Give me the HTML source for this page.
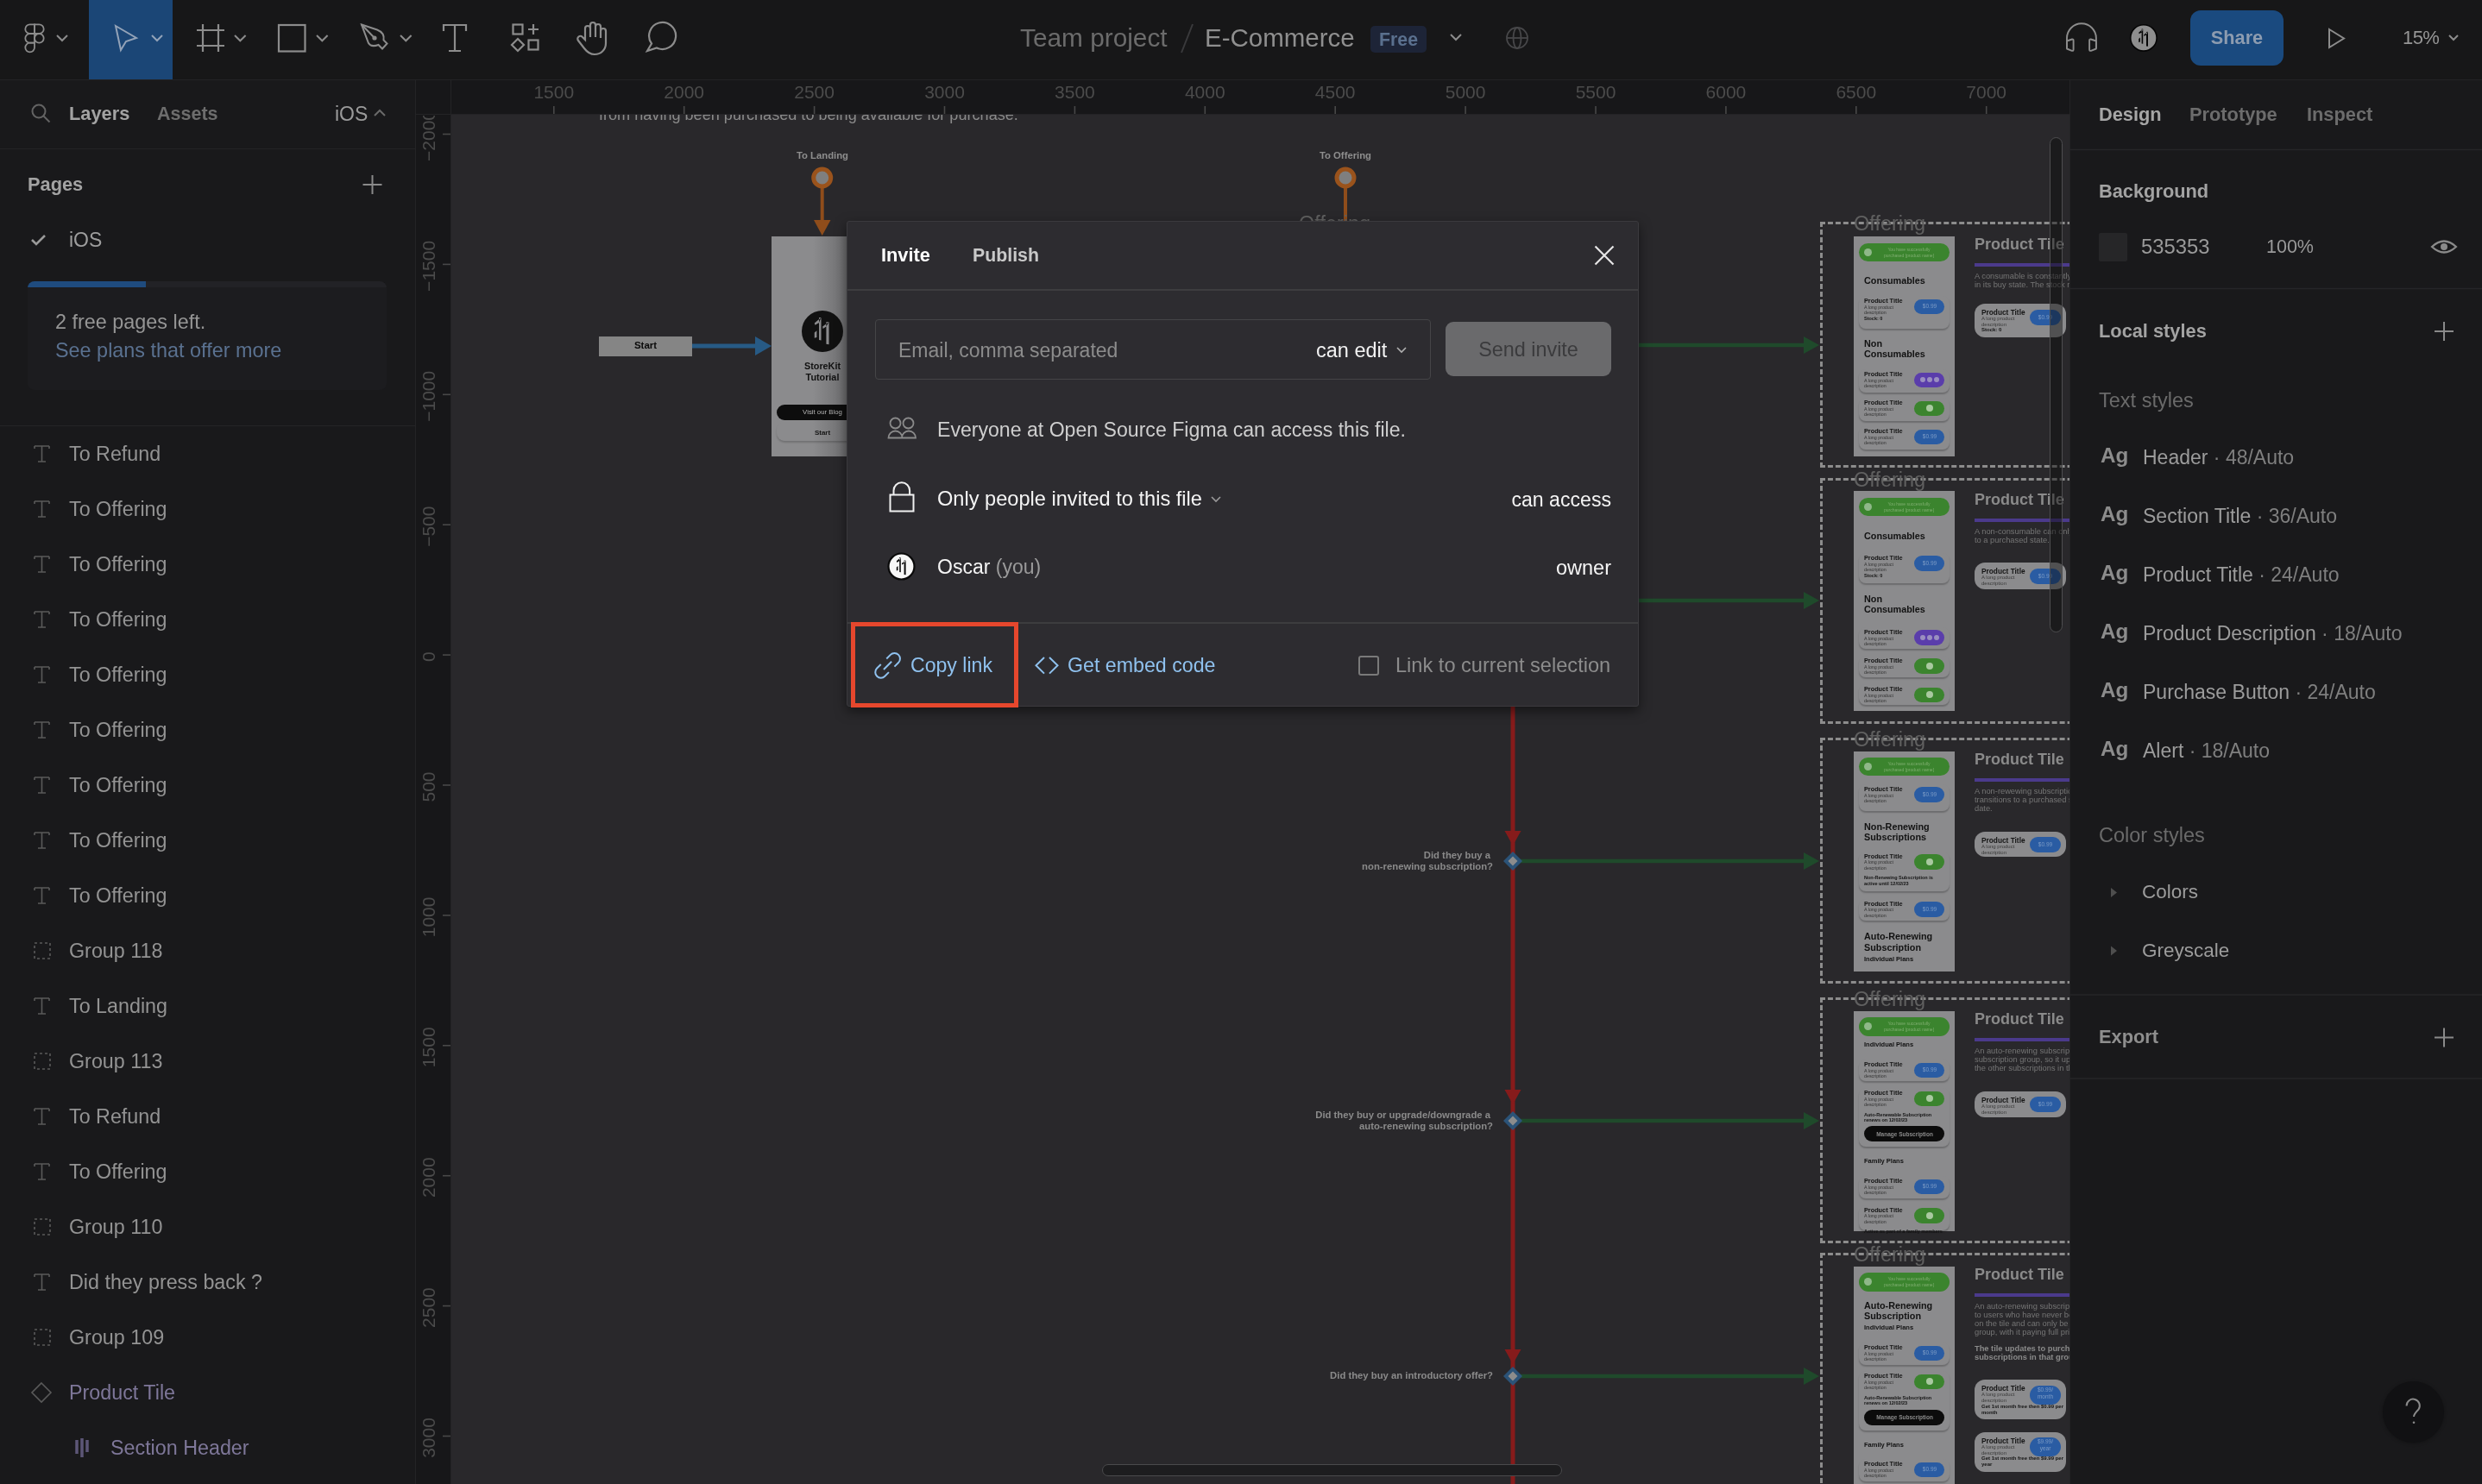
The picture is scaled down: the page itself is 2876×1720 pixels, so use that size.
<!DOCTYPE html>
<html><head><meta charset="utf-8">
<style>
*{box-sizing:border-box}
html,body{margin:0;padding:0}
body{width:2876px;height:1720px;position:relative;overflow:hidden;background:#19191b;font-family:"Liberation Sans",sans-serif;color:#9a9a9a}
.a{position:absolute}
.t{position:absolute;white-space:nowrap;line-height:30px;height:30px;will-change:transform}
svg{position:absolute;overflow:visible}
</style></head><body>

<!-- TOOLBAR -->
<div class="a" style="left:0;top:0;width:2876px;height:92px;background:#171718"></div>
<div class="a" style="left:0;top:92px;width:2876px;height:1px;background:#232325"></div>
<div class="a" style="left:103px;top:0;width:97px;height:92px;background:#1b4676"></div>
<svg style="left:0;top:0" width="900" height="92" fill="none" stroke="#8c8c8c" stroke-width="2.2">
  <!-- figma logo -->
  <g transform="translate(29.3,28.3)" stroke-width="1.8">
    <path d="M10.7 0H5.35a5.35 5.35 0 0 0 0 10.7h5.35z"/>
    <path d="M10.7 0h5.35a5.35 5.35 0 0 1 0 10.7h-5.35z"/>
    <path d="M10.7 10.7H5.35a5.35 5.35 0 0 0 0 10.7h5.35z"/>
    <circle cx="16.05" cy="16.05" r="5.35"/>
    <path d="M10.7 21.4H5.35a5.35 5.35 0 1 0 5.35 5.35z"/>
  </g>
  <path d="M66 41l6 6 6-6" stroke-width="2"/>
  <!-- select arrow -->
  <path d="M134 30L158 44L146 48L140 58Z" stroke="#93a3b8" stroke-width="2"/>
  <path d="M176 41l6 6 6-6" stroke="#93a3b8" stroke-width="2"/>
  <!-- frame -->
  <path d="M235 28v32M253 28v32M228 35h32M228 53h32"/>
  <path d="M272 41l6.3 6.3 6.3-6.3" stroke-width="2"/>
  <!-- rect -->
  <rect x="323" y="29" width="30.5" height="30.5"/>
  <path d="M367 41l6.3 6.3 6.3-6.3" stroke-width="2"/>
  <!-- pen -->
  <path d="M419 28.5L437 34.5Q446 38 444.5 46.5L448.5 50.5L443 56.5L438.5 52Q430 55 427 50Z" stroke-width="2"/>
  <path d="M419 28.5L433 43" stroke-width="2"/>
  <circle cx="434" cy="44" r="2.6" fill="#8c8c8c" stroke="none"/>
  <path d="M464 41l6.3 6.3 6.3-6.3" stroke-width="2"/>
  <!-- text -->
  <path d="M514 29h26M527 29v30M520 59h14M514 28v8M540 28v8"/>
  <!-- components -->
  <rect x="594.5" y="28.5" width="11" height="11"/>
  <path d="M618 28v12M612 34h12"/>
  <rect x="612.5" y="46.5" width="11" height="11"/>
  <path d="M600 45l7 7-7 7-7-7z"/>
  <!-- hand -->
  <path d="M678 46V33a3 3 0 0 1 6 0v10V29a3 3 0 0 1 6 0v14V31a3 3 0 0 1 6 0v13V36a3 3 0 0 1 6 0v14c0 8-6 13-13 13-6 0-9-3-12-7l-7-9a3 3 0 0 1 5-4z"/>
  <!-- comment -->
  <path d="M750 59l5-8.5a15.5 15.5 0 1 1 6 5z"/>
</svg>
<div class="t" style="left:1182px;top:29px;font-size:29.8px;color:#6b6b6b">Team project</div>
<svg style="left:0;top:0" width="1" height="1"><path d="M1382 28L1369 61" stroke="#3a3a3c" stroke-width="2"/></svg>
<div class="t" style="left:1396px;top:29px;font-size:29.5px;color:#8f8f8f">E-Commerce</div>
<div class="a" style="left:1588px;top:30px;width:65px;height:31px;border-radius:5px;background:#1d2437"></div>
<div class="t" style="left:1588px;width:65px;text-align:center;top:31px;font-size:21.3px;font-weight:700;color:#5a708e">Free</div>
<svg style="left:0;top:0" width="2876" height="92" fill="none" stroke="#8c8c8c" stroke-width="2">
  <path d="M1681 40l6 6 6-6"/>
  <g stroke="#474749" stroke-width="1.8">
    <circle cx="1758" cy="44" r="12"/>
    <ellipse cx="1758" cy="44" rx="4.5" ry="12"/>
    <path d="M1746 44h24"/>
  </g>
  <!-- headphones -->
  <g stroke-width="1.9" stroke-linejoin="round">
  <path d="M2395 56V44.15A16.95 16.95 0 0 1 2428.9 44.15V56"/>
  <path d="M2395 47.5L2401 45.5Q2402.6 45.2 2402.6 47V57.3Q2402.6 59.3 2400.8 58.8L2395 56.5Z"/>
  <path d="M2428.9 47.5L2422.7 45.5Q2421.1 45.2 2421.1 47V57.3Q2421.1 59.3 2422.9 58.8L2428.9 56.5Z"/>
  </g>
  <!-- play -->
  <path d="M2699 34l17 10.5-17 10.5z"/>
  <path d="M2838 41l5 5 5-5"/>
</svg>
<svg style="left:0;top:0" width="1" height="1"><circle cx="2483.9" cy="43.9" r="15.2" fill="#8e8e8e" stroke="#050505" stroke-width="1.6"/><path transform="translate(2483.9 43.9)" d="M-2.3 -10.4L-0.7 -10.4L-0.7 6.8L-2.3 6.5ZM-0.7 -10.4L-5.7 -6.2L-5.2 -4.6L-2.3 -6.5ZM-5.7 1L-4 -0.5L-4 4.5L-5.7 5ZM3.1 -7L5.1 -7.1L5.1 9.8L3.1 9.5ZM5.1 -7.1L0.4 -3.6L0.6 -1.9L3.1 -3.6Z" fill="#050505"/></svg>
<div class="a" style="left:2538px;top:12px;width:108px;height:64px;border-radius:12px;background:#1a4a7f"></div>
<div class="t" style="left:2538px;top:29px;width:108px;text-align:center;font-size:21.7px;font-weight:700;color:#8d9cb0">Share</div>
<div class="t" style="left:2784px;top:29px;font-size:22px;letter-spacing:-0.6px;color:#969696">15%</div>

<!-- LEFT PANEL -->
<div class="a" id="left" style="left:0;top:93px;width:481px;height:1627px;background:#19191b"></div>
<div class="a" style="left:481px;top:93px;width:1px;height:1627px;background:#242426"></div>
<div class="a" style="left:0;top:172px;width:481px;height:1px;background:#242426"></div>
<div class="a" style="left:0;top:493px;width:481px;height:1px;background:#242426"></div>


<!-- LEFT CONTENT -->
<svg style="left:0;top:0" width="481" height="300" fill="none" stroke="#8a8a8a" stroke-width="2">
  <g stroke="#636363"><circle cx="45" cy="129" r="7.5"/>
  <path d="M50.5 134.5l7 7"/></g>
  <path d="M434 134l6-6 6 6" stroke="#6a6a6a"/>
  <path d="M431.5 203v22M420.5 214h22" stroke="#8a8a8a"/>
  <path d="M37 278l5 5 10-10" stroke="#9a9a9a" stroke-width="2.6"/>
</svg>
<div class="t" style="left:80px;top:117px;font-size:21.8px;font-weight:700;color:#a3a3a3">Layers</div>
<div class="t" style="left:182px;top:117px;font-size:21.5px;font-weight:700;color:#6d6d6d">Assets</div>
<div class="t" style="left:388px;top:117px;font-size:23px;color:#9a9a9a">iOS</div>
<div class="t" style="left:32px;top:199px;font-size:21.8px;font-weight:700;color:#a3a3a3">Pages</div>
<div class="t" style="left:80px;top:263px;font-size:23px;color:#9d9d9d">iOS</div>
<div class="a" style="left:32px;top:326px;width:416px;height:126px;border-radius:8px;background:#1c1c1f;overflow:hidden">
  <div class="a" style="left:0;top:0;width:416px;height:7px;background:#222226"></div>
  <div class="a" style="left:0;top:0;width:137px;height:7px;background:#1f4b7e"></div>
</div>
<div class="t" style="left:64px;top:358px;font-size:23.4px;color:#959595">2 free pages left.</div>
<div class="t" style="left:64px;top:391px;font-size:23.4px;color:#5a7190">See plans that offer more</div>
<svg style="left:0;top:0" width="1" height="1" fill="none" stroke="#5a5a5a" stroke-width="1.6"><path d="M40 517h17M48.5 517v18M44 535h9M40 517v3M57 517v3"/></svg>
<div class="t" style="left:80px;top:511px;font-size:23.3px;color:#939393">To Refund</div>
<svg style="left:0;top:0" width="1" height="1" fill="none" stroke="#5a5a5a" stroke-width="1.6"><path d="M40 581h17M48.5 581v18M44 599h9M40 581v3M57 581v3"/></svg>
<div class="t" style="left:80px;top:575px;font-size:23.3px;color:#939393">To Offering</div>
<svg style="left:0;top:0" width="1" height="1" fill="none" stroke="#5a5a5a" stroke-width="1.6"><path d="M40 645h17M48.5 645v18M44 663h9M40 645v3M57 645v3"/></svg>
<div class="t" style="left:80px;top:639px;font-size:23.3px;color:#939393">To Offering</div>
<svg style="left:0;top:0" width="1" height="1" fill="none" stroke="#5a5a5a" stroke-width="1.6"><path d="M40 709h17M48.5 709v18M44 727h9M40 709v3M57 709v3"/></svg>
<div class="t" style="left:80px;top:703px;font-size:23.3px;color:#939393">To Offering</div>
<svg style="left:0;top:0" width="1" height="1" fill="none" stroke="#5a5a5a" stroke-width="1.6"><path d="M40 773h17M48.5 773v18M44 791h9M40 773v3M57 773v3"/></svg>
<div class="t" style="left:80px;top:767px;font-size:23.3px;color:#939393">To Offering</div>
<svg style="left:0;top:0" width="1" height="1" fill="none" stroke="#5a5a5a" stroke-width="1.6"><path d="M40 837h17M48.5 837v18M44 855h9M40 837v3M57 837v3"/></svg>
<div class="t" style="left:80px;top:831px;font-size:23.3px;color:#939393">To Offering</div>
<svg style="left:0;top:0" width="1" height="1" fill="none" stroke="#5a5a5a" stroke-width="1.6"><path d="M40 901h17M48.5 901v18M44 919h9M40 901v3M57 901v3"/></svg>
<div class="t" style="left:80px;top:895px;font-size:23.3px;color:#939393">To Offering</div>
<svg style="left:0;top:0" width="1" height="1" fill="none" stroke="#5a5a5a" stroke-width="1.6"><path d="M40 965h17M48.5 965v18M44 983h9M40 965v3M57 965v3"/></svg>
<div class="t" style="left:80px;top:959px;font-size:23.3px;color:#939393">To Offering</div>
<svg style="left:0;top:0" width="1" height="1" fill="none" stroke="#5a5a5a" stroke-width="1.6"><path d="M40 1029h17M48.5 1029v18M44 1047h9M40 1029v3M57 1029v3"/></svg>
<div class="t" style="left:80px;top:1023px;font-size:23.3px;color:#939393">To Offering</div>
<svg style="left:0;top:0" width="1" height="1" fill="none" stroke="#5a5a5a" stroke-width="1.6"><rect x="40" y="1093" width="18" height="18" stroke-dasharray="3 3"/></svg>
<div class="t" style="left:80px;top:1087px;font-size:23.3px;color:#939393">Group 118</div>
<svg style="left:0;top:0" width="1" height="1" fill="none" stroke="#5a5a5a" stroke-width="1.6"><path d="M40 1157h17M48.5 1157v18M44 1175h9M40 1157v3M57 1157v3"/></svg>
<div class="t" style="left:80px;top:1151px;font-size:23.3px;color:#939393">To Landing</div>
<svg style="left:0;top:0" width="1" height="1" fill="none" stroke="#5a5a5a" stroke-width="1.6"><rect x="40" y="1221" width="18" height="18" stroke-dasharray="3 3"/></svg>
<div class="t" style="left:80px;top:1215px;font-size:23.3px;color:#939393">Group 113</div>
<svg style="left:0;top:0" width="1" height="1" fill="none" stroke="#5a5a5a" stroke-width="1.6"><path d="M40 1285h17M48.5 1285v18M44 1303h9M40 1285v3M57 1285v3"/></svg>
<div class="t" style="left:80px;top:1279px;font-size:23.3px;color:#939393">To Refund</div>
<svg style="left:0;top:0" width="1" height="1" fill="none" stroke="#5a5a5a" stroke-width="1.6"><path d="M40 1349h17M48.5 1349v18M44 1367h9M40 1349v3M57 1349v3"/></svg>
<div class="t" style="left:80px;top:1343px;font-size:23.3px;color:#939393">To Offering</div>
<svg style="left:0;top:0" width="1" height="1" fill="none" stroke="#5a5a5a" stroke-width="1.6"><rect x="40" y="1413" width="18" height="18" stroke-dasharray="3 3"/></svg>
<div class="t" style="left:80px;top:1407px;font-size:23.3px;color:#939393">Group 110</div>
<svg style="left:0;top:0" width="1" height="1" fill="none" stroke="#5a5a5a" stroke-width="1.6"><path d="M40 1477h17M48.5 1477v18M44 1495h9M40 1477v3M57 1477v3"/></svg>
<div class="t" style="left:80px;top:1471px;font-size:23.3px;color:#939393">Did they press back ?</div>
<svg style="left:0;top:0" width="1" height="1" fill="none" stroke="#5a5a5a" stroke-width="1.6"><rect x="40" y="1541" width="18" height="18" stroke-dasharray="3 3"/></svg>
<div class="t" style="left:80px;top:1535px;font-size:23.3px;color:#939393">Group 109</div>
<svg style="left:0;top:0" width="1" height="1" fill="none" stroke="#5a5a5a" stroke-width="1.6"><path d="M48 1603l11 11-11 11-11-11z"/></svg>
<div class="t" style="left:80px;top:1599px;font-size:23.3px;color:#7e7799">Product Tile</div>
<svg style="left:0;top:0" width="1" height="1" fill="none" stroke="#5a5a5a" stroke-width="1.6"><path d="M89 1669v16M95 1667v22M101 1669v14" stroke-width="3.5" stroke="#5c5677"/></svg>
<div class="t" style="left:128px;top:1663px;font-size:23.3px;color:#7e7799">Section Header</div>

<!-- RULERS -->
<div class="a" style="left:482px;top:93px;width:1916px;height:40px;background:#171719"></div>
<div class="a" style="left:482px;top:133px;width:40px;height:1587px;background:#171719"></div>
<div class="a" style="left:482px;top:132px;width:1916px;height:1px;background:#232325"></div>
<div class="a" style="left:522px;top:93px;width:1px;height:1627px;background:#232325"></div>



<!-- RULER LABELS -->
<svg style="left:0;top:0" width="2876" height="1720">
<g font-family="Liberation Sans" font-size="21px" fill="#4b4b4b" text-anchor="middle">
<text x="641.8" y="114">1500</text>
<text x="792.7" y="114">2000</text>
<text x="943.6" y="114">2500</text>
<text x="1094.5" y="114">3000</text>
<text x="1245.4" y="114">3500</text>
<text x="1396.3" y="114">4000</text>
<text x="1547.2" y="114">4500</text>
<text x="1698.1" y="114">5000</text>
<text x="1849.0" y="114">5500</text>
<text x="1999.9" y="114">6000</text>
<text x="2150.8" y="114">6500</text>
<text x="2301.7" y="114">7000</text>
</g>
<g stroke="#484848" stroke-width="1.6">
<path d="M641.8 123v9"/>
<path d="M792.7 123v9"/>
<path d="M943.6 123v9"/>
<path d="M1094.5 123v9"/>
<path d="M1245.4 123v9"/>
<path d="M1396.3 123v9"/>
<path d="M1547.2 123v9"/>
<path d="M1698.1 123v9"/>
<path d="M1849.0 123v9"/>
<path d="M1999.9 123v9"/>
<path d="M2150.8 123v9"/>
<path d="M2301.7 123v9"/>
</g></svg>
<div class="a" style="left:482px;top:134px;width:40px;height:1586px;overflow:hidden"><svg style="left:-482px;top:-134px" width="2876" height="1720">
<g font-family="Liberation Sans" font-size="21px" fill="#4b4b4b" text-anchor="middle">
<text transform="translate(504,157.5) rotate(-90)">−2000</text>
<text transform="translate(504,308.4) rotate(-90)">−1500</text>
<text transform="translate(504,459.3) rotate(-90)">−1000</text>
<text transform="translate(504,610.2) rotate(-90)">−500</text>
<text transform="translate(504,761.1) rotate(-90)">0</text>
<text transform="translate(504,912.0) rotate(-90)">500</text>
<text transform="translate(504,1062.9) rotate(-90)">1000</text>
<text transform="translate(504,1213.8) rotate(-90)">1500</text>
<text transform="translate(504,1364.7) rotate(-90)">2000</text>
<text transform="translate(504,1515.6) rotate(-90)">2500</text>
<text transform="translate(504,1666.5) rotate(-90)">3000</text>
<text transform="translate(504,1817.4) rotate(-90)">3500</text>
</g>
<g stroke="#484848" stroke-width="1.6">
<path d="M513 155.5h9"/>
<path d="M513 306.4h9"/>
<path d="M513 457.3h9"/>
<path d="M513 608.2h9"/>
<path d="M513 759.1h9"/>
<path d="M513 910.0h9"/>
<path d="M513 1060.9h9"/>
<path d="M513 1211.8h9"/>
<path d="M513 1362.7h9"/>
<path d="M513 1513.6h9"/>
<path d="M513 1664.5h9"/>
<path d="M513 1815.4h9"/>
</g>
</svg></div>
<!-- CANVAS -->
<div class="a" id="canvas" style="left:523px;top:133px;width:1875px;height:1587px;background:#29282b;overflow:hidden"><div class="a" style="left:-523px;top:-133px;width:2876px;height:1720px">
<!-- CANVAS START -->
<div class="t" style="left:694.0px;top:123.1px;height:21.7px;line-height:21.7px;font-size:18.1px;font-weight:400;color:#8a8a8a;">from having been purchased to being available for purchase.</div>
<div class="t" style="left:652.7px;width:600px;text-align:center;top:174.2px;height:13.6px;line-height:13.6px;font-size:11.3px;font-weight:700;color:#8e8e8e;">To Landing</div>
<svg style="left:0;top:0" width="1" height="1"><path d="M952.7 206V258" stroke="#8f4d1b" stroke-width="4"/><circle cx="952.7" cy="206" r="10" fill="#7f7f7f" stroke="#9a531c" stroke-width="5"/></svg>
<svg style="left:0;top:0" width="1" height="1"><path d="M943 255L962.5 255L952.7 273Z" fill="#8f4d1b"/></svg>
<div class="t" style="left:1259.0px;width:600px;text-align:center;top:174.2px;height:13.6px;line-height:13.6px;font-size:11.3px;font-weight:700;color:#8e8e8e;">To Offering</div>
<svg style="left:0;top:0" width="1" height="1"><path d="M1559 206V256" stroke="#8f4d1b" stroke-width="4"/><circle cx="1559" cy="206" r="10" fill="#7f7f7f" stroke="#9a531c" stroke-width="5"/></svg>
<div class="t" style="left:1505.0px;top:244.9px;height:28.2px;line-height:28.2px;font-size:23.5px;font-weight:400;color:#606060;">Offering</div>
<div class="a" style="left:694.0px;top:390.0px;width:108.0px;height:22.5px;background:#858585;border-radius:0px;"></div>
<div class="t" style="left:448.0px;width:600px;text-align:center;top:394.1px;height:13.8px;line-height:13.8px;font-size:11.5px;font-weight:700;color:#0b0b0b;">Start</div>
<svg style="left:0;top:0" width="1" height="1"><path d="M802 401H878" stroke="#275a85" stroke-width="5"/><path d="M875 390L894 401L875 412Z" fill="#275a85"/></svg>
<div class="a" style="left:894.0px;top:274.0px;width:87.0px;height:255.0px;background:#8b8b8d;border-radius:0px;background:linear-gradient(90deg,#8b8b8d 0%,#8b8b8d 55%,#6e6e70 100%)"></div>
<div class="a" style="left:928.6px;top:360px;width:48px;height:48px;border-radius:50%;background:#111"></div>
<svg style="left:0;top:0" width="1" height="1"><path transform="translate(952.6 384) scale(1.55)" d="M-2.3 -10.4L-0.7 -10.4L-0.7 6.8L-2.3 6.5ZM-0.7 -10.4L-5.7 -6.2L-5.2 -4.6L-2.3 -6.5ZM-5.7 1L-4 -0.5L-4 4.5L-5.7 5ZM3.1 -7L5.1 -7.1L5.1 9.8L3.1 9.5ZM5.1 -7.1L0.4 -3.6L0.6 -1.9L3.1 -3.6Z" fill="#8b8b8d"/></svg>
<div class="t" style="left:652.6px;width:600px;text-align:center;top:418.0px;height:13.0px;line-height:13.0px;font-size:10.8px;font-weight:700;color:#111;">StoreKit</div>
<div class="t" style="left:652.6px;width:600px;text-align:center;top:430.5px;height:13.0px;line-height:13.0px;font-size:10.8px;font-weight:700;color:#111;">Tutorial</div>
<div class="a" style="left:900.0px;top:468.5px;width:110.0px;height:18.0px;background:#0d0d0d;border-radius:9px;"></div>
<div class="t" style="left:653.0px;width:600px;text-align:center;top:472.8px;height:9.4px;line-height:9.4px;font-size:7.8px;font-weight:400;color:#b5b5b5;">Visit our Blog</div>
<div class="a" style="left:900.0px;top:489.0px;width:110.0px;height:22.0px;background:transparent;border-radius:9px;box-shadow:0 2px 2px rgba(0,0,0,0.18)"></div>
<div class="t" style="left:652.6px;width:600px;text-align:center;top:496.7px;height:9.6px;line-height:9.6px;font-size:8px;font-weight:700;color:#151515;">Start</div>
<svg style="left:0;top:0" width="1" height="1"><path d="M1753 700V1720" stroke="#861b1b" stroke-width="5"/><path d="M1743.5 963L1762.5 963L1753 980Z" fill="#861b1b"/><path d="M1743.5 1263L1762.5 1263L1753 1280Z" fill="#861b1b"/><path d="M1743.5 1564L1762.5 1564L1753 1581Z" fill="#861b1b"/><path d="M1760 998H2092" stroke="#1f4a2b" stroke-width="4.5"/><path d="M2090 988L2108 998L2090 1008Z" fill="#1f4a2b"/><path d="M1753 987L1764 998L1753 1009L1742 998Z" fill="#2b5378"/><path d="M1753 992.5L1758.5 998L1753 1003.5L1747.5 998Z" fill="#8c8c8c"/><path d="M1760 1299H2092" stroke="#1f4a2b" stroke-width="4.5"/><path d="M2090 1289L2108 1299L2090 1309Z" fill="#1f4a2b"/><path d="M1753 1288L1764 1299L1753 1310L1742 1299Z" fill="#2b5378"/><path d="M1753 1293.5L1758.5 1299L1753 1304.5L1747.5 1299Z" fill="#8c8c8c"/><path d="M1760 1595H2092" stroke="#1f4a2b" stroke-width="4.5"/><path d="M2090 1585L2108 1595L2090 1605Z" fill="#1f4a2b"/><path d="M1753 1584L1764 1595L1753 1606L1742 1595Z" fill="#2b5378"/><path d="M1753 1589.5L1758.5 1595L1753 1600.5L1747.5 1595Z" fill="#8c8c8c"/><path d="M1890 400H2092" stroke="#1f4a2b" stroke-width="4.5"/><path d="M2090 390L2108 400L2090 410Z" fill="#1f4a2b"/><path d="M1890 696H2092" stroke="#1f4a2b" stroke-width="4.5"/><path d="M2090 686L2108 696L2090 706Z" fill="#1f4a2b"/></svg>
<div class="t" style="left:1127.0px;width:600px;text-align:right;top:984.8px;height:13.6px;line-height:13.6px;font-size:11.3px;font-weight:700;color:#8a8a8a;">Did they buy a</div>
<div class="t" style="left:1130.0px;width:600px;text-align:right;top:997.8px;height:13.6px;line-height:13.6px;font-size:11.3px;font-weight:700;color:#8a8a8a;">non-renewing subscription?</div>
<div class="t" style="left:1127.0px;width:600px;text-align:right;top:1286.2px;height:13.6px;line-height:13.6px;font-size:11.3px;font-weight:700;color:#8a8a8a;">Did they buy or upgrade/downgrade a</div>
<div class="t" style="left:1130.0px;width:600px;text-align:right;top:1299.2px;height:13.6px;line-height:13.6px;font-size:11.3px;font-weight:700;color:#8a8a8a;">auto-renewing subscription?</div>
<div class="t" style="left:1130.0px;width:600px;text-align:right;top:1588.2px;height:13.6px;line-height:13.6px;font-size:11.3px;font-weight:700;color:#8a8a8a;">Did they buy an introductory offer?</div>
<div class="a" style="left:2109px;top:257.0px;width:400px;height:285px;border:3px dashed #8c8c8c"></div>
<div class="t" style="left:2148.0px;top:245.4px;height:28.2px;line-height:28.2px;font-size:23.5px;font-weight:400;color:#606060;">Offering</div>
<div class="t" style="left:2288.0px;top:272.7px;height:21.6px;line-height:21.6px;font-size:18px;font-weight:700;color:#8a8a8a;">Product Tile</div>
<div class="a" style="left:2288.0px;top:304.5px;width:112.0px;height:4.0px;background:#4b3a8c;border-radius:0px;"></div>
<div class="t" style="left:2288.0px;top:314.9px;height:11.2px;line-height:11.2px;font-size:9.3px;font-weight:400;color:#757575;">A consumable is constantly purchas</div>
<div class="t" style="left:2288.0px;top:324.7px;height:11.2px;line-height:11.2px;font-size:9.3px;font-weight:400;color:#757575;">in its buy state. The stock number</div>
<div class="a" style="left:2288.0px;top:352.0px;width:106.0px;height:38.5px;background:#8b8b8d;border-radius:12px;"></div>
<div class="t" style="left:2296.0px;top:357.0px;height:10.0px;line-height:10.0px;font-size:8.3px;font-weight:700;color:#141414;">Product Title</div>
<div class="t" style="left:2296.0px;top:365.9px;height:7.2px;line-height:7.2px;font-size:6px;font-weight:400;color:#3a3a3a;">A long product</div>
<div class="t" style="left:2296.0px;top:372.9px;height:7.2px;line-height:7.2px;font-size:6px;font-weight:400;color:#3a3a3a;">description</div>
<div class="t" style="left:2296.0px;top:379.4px;height:7.2px;line-height:7.2px;font-size:6px;font-weight:700;color:#141414;">Stock: 0</div>
<div class="a" style="left:2352.0px;top:358.5px;width:36.0px;height:18.0px;background:#2a5ca3;border-radius:12px;"></div>
<div class="t" style="left:2070.0px;width:600px;text-align:center;top:363.6px;height:7.8px;line-height:7.8px;font-size:6.5px;font-weight:400;color:#7d9cc6;">$0.99</div>
<div class="a" style="left:2148.0px;top:274.0px;width:117.2px;height:254.6px;background:#8b8b8d;border-radius:0px;"></div>
<div class="a" style="left:2154.0px;top:281.6px;width:105.0px;height:21.5px;background:#3b842e;border-radius:11px;"></div>
<div class="a" style="left:2160px;top:287.6px;width:9px;height:9px;border-radius:50%;background:#8fb889"></div>
<div class="t" style="left:1912.0px;width:600px;text-align:center;top:285.6px;height:6.0px;line-height:6.0px;font-size:5px;font-weight:400;color:#7fae70;">You have successfully</div>
<div class="t" style="left:1912.0px;width:600px;text-align:center;top:292.6px;height:6.0px;line-height:6.0px;font-size:5px;font-weight:400;color:#7fae70;">purchased [product name]</div>
<div class="t" style="left:2160.0px;top:319.1px;height:13.0px;line-height:13.0px;font-size:10.8px;font-weight:700;color:#121212;">Consumables</div>
<div class="a" style="left:2154.0px;top:343.0px;width:105.0px;height:38.0px;background:#8b8b8d;border-radius:8px;box-shadow:0 2px 1.5px rgba(0,0,0,0.22)"></div>
<div class="t" style="left:2160.0px;top:345.1px;height:8.8px;line-height:8.8px;font-size:7.3px;font-weight:700;color:#141414;">Product Title</div>
<div class="t" style="left:2160.0px;top:352.8px;height:6.4px;line-height:6.4px;font-size:5.3px;font-weight:400;color:#333;">A long product</div>
<div class="t" style="left:2160.0px;top:359.3px;height:6.4px;line-height:6.4px;font-size:5.3px;font-weight:400;color:#333;">description</div>
<div class="t" style="left:2160.0px;top:365.7px;height:6.6px;line-height:6.6px;font-size:5.5px;font-weight:700;color:#141414;">Stock: 0</div>
<div class="a" style="left:2218.0px;top:346.5px;width:35.0px;height:17.5px;background:#2a5ca3;border-radius:20px;"></div>
<div class="t" style="left:1935.5px;width:600px;text-align:center;top:351.4px;height:7.8px;line-height:7.8px;font-size:6.5px;font-weight:400;color:#7d9cc6;">$0.99</div>
<div class="t" style="left:2160.0px;top:391.5px;height:13.0px;line-height:13.0px;font-size:10.8px;font-weight:700;color:#121212;">Non</div>
<div class="t" style="left:2160.0px;top:403.5px;height:13.0px;line-height:13.0px;font-size:10.8px;font-weight:700;color:#121212;">Consumables</div>
<div class="a" style="left:2154.0px;top:428.0px;width:105.0px;height:27.0px;background:#8b8b8d;border-radius:8px;box-shadow:0 2px 1.5px rgba(0,0,0,0.22)"></div>
<div class="t" style="left:2160.0px;top:430.1px;height:8.8px;line-height:8.8px;font-size:7.3px;font-weight:700;color:#141414;">Product Title</div>
<div class="t" style="left:2160.0px;top:437.8px;height:6.4px;line-height:6.4px;font-size:5.3px;font-weight:400;color:#333;">A long product</div>
<div class="t" style="left:2160.0px;top:444.3px;height:6.4px;line-height:6.4px;font-size:5.3px;font-weight:400;color:#333;">description</div>
<div class="a" style="left:2218.0px;top:431.5px;width:35.0px;height:17.5px;background:#5a3dab;border-radius:20px;"></div>
<div class="a" style="left:2224.5px;top:437.2px;width:6px;height:6px;border-radius:50%;background:#9a8fc0"></div>
<div class="a" style="left:2232.5px;top:437.2px;width:6px;height:6px;border-radius:50%;background:#9a8fc0"></div>
<div class="a" style="left:2240.5px;top:437.2px;width:6px;height:6px;border-radius:50%;background:#9a8fc0"></div>
<div class="a" style="left:2154.0px;top:461.0px;width:105.0px;height:27.0px;background:#8b8b8d;border-radius:8px;box-shadow:0 2px 1.5px rgba(0,0,0,0.22)"></div>
<div class="t" style="left:2160.0px;top:463.1px;height:8.8px;line-height:8.8px;font-size:7.3px;font-weight:700;color:#141414;">Product Title</div>
<div class="t" style="left:2160.0px;top:470.8px;height:6.4px;line-height:6.4px;font-size:5.3px;font-weight:400;color:#333;">A long product</div>
<div class="t" style="left:2160.0px;top:477.3px;height:6.4px;line-height:6.4px;font-size:5.3px;font-weight:400;color:#333;">description</div>
<div class="a" style="left:2218.0px;top:464.5px;width:35.0px;height:17.5px;background:#3b842e;border-radius:20px;"></div>
<div class="a" style="left:2231.5px;top:469.2px;width:8px;height:8px;border-radius:50%;background:#a9c9a0"></div>
<div class="a" style="left:2154.0px;top:494.0px;width:105.0px;height:27.0px;background:#8b8b8d;border-radius:8px;box-shadow:0 2px 1.5px rgba(0,0,0,0.22)"></div>
<div class="t" style="left:2160.0px;top:496.1px;height:8.8px;line-height:8.8px;font-size:7.3px;font-weight:700;color:#141414;">Product Title</div>
<div class="t" style="left:2160.0px;top:503.8px;height:6.4px;line-height:6.4px;font-size:5.3px;font-weight:400;color:#333;">A long product</div>
<div class="t" style="left:2160.0px;top:510.3px;height:6.4px;line-height:6.4px;font-size:5.3px;font-weight:400;color:#333;">description</div>
<div class="a" style="left:2218.0px;top:497.5px;width:35.0px;height:17.5px;background:#2a5ca3;border-radius:20px;"></div>
<div class="t" style="left:1935.5px;width:600px;text-align:center;top:502.4px;height:7.8px;line-height:7.8px;font-size:6.5px;font-weight:400;color:#7d9cc6;">$0.99</div>
<div class="a" style="left:2109px;top:553.5px;width:400px;height:285px;border:3px dashed #8c8c8c"></div>
<div class="t" style="left:2148.0px;top:541.9px;height:28.2px;line-height:28.2px;font-size:23.5px;font-weight:400;color:#606060;">Offering</div>
<div class="t" style="left:2288.0px;top:569.2px;height:21.6px;line-height:21.6px;font-size:18px;font-weight:700;color:#8a8a8a;">Product Tile</div>
<div class="a" style="left:2288.0px;top:601.0px;width:112.0px;height:4.0px;background:#4b3a8c;border-radius:0px;"></div>
<div class="t" style="left:2288.0px;top:611.4px;height:11.2px;line-height:11.2px;font-size:9.3px;font-weight:400;color:#757575;">A non-consumable can only be</div>
<div class="t" style="left:2288.0px;top:621.2px;height:11.2px;line-height:11.2px;font-size:9.3px;font-weight:400;color:#757575;">to a purchased state.</div>
<div class="a" style="left:2288.0px;top:652.0px;width:106.0px;height:30.5px;background:#8b8b8d;border-radius:12px;"></div>
<div class="t" style="left:2296.0px;top:657.0px;height:10.0px;line-height:10.0px;font-size:8.3px;font-weight:700;color:#141414;">Product Title</div>
<div class="t" style="left:2296.0px;top:665.9px;height:7.2px;line-height:7.2px;font-size:6px;font-weight:400;color:#3a3a3a;">A long product</div>
<div class="t" style="left:2296.0px;top:672.9px;height:7.2px;line-height:7.2px;font-size:6px;font-weight:400;color:#3a3a3a;">description</div>
<div class="a" style="left:2352.0px;top:658.5px;width:36.0px;height:18.0px;background:#2a5ca3;border-radius:12px;"></div>
<div class="t" style="left:2070.0px;width:600px;text-align:center;top:663.6px;height:7.8px;line-height:7.8px;font-size:6.5px;font-weight:400;color:#7d9cc6;">$0.99</div>
<div class="a" style="left:2148.0px;top:569.3px;width:117.2px;height:254.6px;background:#8b8b8d;border-radius:0px;"></div>
<div class="a" style="left:2154.0px;top:576.6px;width:105.0px;height:21.5px;background:#3b842e;border-radius:11px;"></div>
<div class="a" style="left:2160px;top:582.6px;width:9px;height:9px;border-radius:50%;background:#8fb889"></div>
<div class="t" style="left:1912.0px;width:600px;text-align:center;top:580.6px;height:6.0px;line-height:6.0px;font-size:5px;font-weight:400;color:#7fae70;">You have successfully</div>
<div class="t" style="left:1912.0px;width:600px;text-align:center;top:587.6px;height:6.0px;line-height:6.0px;font-size:5px;font-weight:400;color:#7fae70;">purchased [product name]</div>
<div class="t" style="left:2160.0px;top:614.8px;height:13.0px;line-height:13.0px;font-size:10.8px;font-weight:700;color:#121212;">Consumables</div>
<div class="a" style="left:2154.0px;top:640.8px;width:105.0px;height:35.5px;background:#8b8b8d;border-radius:8px;box-shadow:0 2px 1.5px rgba(0,0,0,0.22)"></div>
<div class="t" style="left:2160.0px;top:642.9px;height:8.8px;line-height:8.8px;font-size:7.3px;font-weight:700;color:#141414;">Product Title</div>
<div class="t" style="left:2160.0px;top:650.6px;height:6.4px;line-height:6.4px;font-size:5.3px;font-weight:400;color:#333;">A long product</div>
<div class="t" style="left:2160.0px;top:657.1px;height:6.4px;line-height:6.4px;font-size:5.3px;font-weight:400;color:#333;">description</div>
<div class="t" style="left:2160.0px;top:663.5px;height:6.6px;line-height:6.6px;font-size:5.5px;font-weight:700;color:#141414;">Stock: 0</div>
<div class="a" style="left:2218.0px;top:644.3px;width:35.0px;height:17.5px;background:#2a5ca3;border-radius:20px;"></div>
<div class="t" style="left:1935.5px;width:600px;text-align:center;top:649.1px;height:7.8px;line-height:7.8px;font-size:6.5px;font-weight:400;color:#7d9cc6;">$0.99</div>
<div class="t" style="left:2160.0px;top:687.5px;height:13.0px;line-height:13.0px;font-size:10.8px;font-weight:700;color:#121212;">Non</div>
<div class="t" style="left:2160.0px;top:700.0px;height:13.0px;line-height:13.0px;font-size:10.8px;font-weight:700;color:#121212;">Consumables</div>
<div class="a" style="left:2154.0px;top:726.7px;width:105.0px;height:25.2px;background:#8b8b8d;border-radius:8px;box-shadow:0 2px 1.5px rgba(0,0,0,0.22)"></div>
<div class="t" style="left:2160.0px;top:728.8px;height:8.8px;line-height:8.8px;font-size:7.3px;font-weight:700;color:#141414;">Product Title</div>
<div class="t" style="left:2160.0px;top:736.5px;height:6.4px;line-height:6.4px;font-size:5.3px;font-weight:400;color:#333;">A long product</div>
<div class="t" style="left:2160.0px;top:743.0px;height:6.4px;line-height:6.4px;font-size:5.3px;font-weight:400;color:#333;">description</div>
<div class="a" style="left:2218.0px;top:730.2px;width:35.0px;height:17.5px;background:#5a3dab;border-radius:20px;"></div>
<div class="a" style="left:2224.5px;top:735.9px;width:6px;height:6px;border-radius:50%;background:#9a8fc0"></div>
<div class="a" style="left:2232.5px;top:735.9px;width:6px;height:6px;border-radius:50%;background:#9a8fc0"></div>
<div class="a" style="left:2240.5px;top:735.9px;width:6px;height:6px;border-radius:50%;background:#9a8fc0"></div>
<div class="a" style="left:2154.0px;top:759.9px;width:105.0px;height:25.1px;background:#8b8b8d;border-radius:8px;box-shadow:0 2px 1.5px rgba(0,0,0,0.22)"></div>
<div class="t" style="left:2160.0px;top:762.0px;height:8.8px;line-height:8.8px;font-size:7.3px;font-weight:700;color:#141414;">Product Title</div>
<div class="t" style="left:2160.0px;top:769.7px;height:6.4px;line-height:6.4px;font-size:5.3px;font-weight:400;color:#333;">A long product</div>
<div class="t" style="left:2160.0px;top:776.2px;height:6.4px;line-height:6.4px;font-size:5.3px;font-weight:400;color:#333;">description</div>
<div class="a" style="left:2218.0px;top:763.4px;width:35.0px;height:17.5px;background:#3b842e;border-radius:20px;"></div>
<div class="a" style="left:2231.5px;top:768.1px;width:8px;height:8px;border-radius:50%;background:#a9c9a0"></div>
<div class="a" style="left:2154.0px;top:793.0px;width:105.0px;height:24.0px;background:#8b8b8d;border-radius:8px;box-shadow:0 2px 1.5px rgba(0,0,0,0.22)"></div>
<div class="t" style="left:2160.0px;top:795.1px;height:8.8px;line-height:8.8px;font-size:7.3px;font-weight:700;color:#141414;">Product Title</div>
<div class="t" style="left:2160.0px;top:802.8px;height:6.4px;line-height:6.4px;font-size:5.3px;font-weight:400;color:#333;">A long product</div>
<div class="t" style="left:2160.0px;top:809.3px;height:6.4px;line-height:6.4px;font-size:5.3px;font-weight:400;color:#333;">description</div>
<div class="a" style="left:2218.0px;top:796.5px;width:35.0px;height:17.5px;background:#3b842e;border-radius:20px;"></div>
<div class="a" style="left:2231.5px;top:801.2px;width:8px;height:8px;border-radius:50%;background:#a9c9a0"></div>
<div class="a" style="left:2109px;top:854.5px;width:400px;height:285px;border:3px dashed #8c8c8c"></div>
<div class="t" style="left:2148.0px;top:842.9px;height:28.2px;line-height:28.2px;font-size:23.5px;font-weight:400;color:#606060;">Offering</div>
<div class="t" style="left:2288.0px;top:870.2px;height:21.6px;line-height:21.6px;font-size:18px;font-weight:700;color:#8a8a8a;">Product Tile</div>
<div class="a" style="left:2288.0px;top:902.0px;width:112.0px;height:4.0px;background:#4b3a8c;border-radius:0px;"></div>
<div class="t" style="left:2288.0px;top:912.4px;height:11.2px;line-height:11.2px;font-size:9.3px;font-weight:400;color:#757575;">A non-rewewing subscription</div>
<div class="t" style="left:2288.0px;top:922.2px;height:11.2px;line-height:11.2px;font-size:9.3px;font-weight:400;color:#757575;">transitions to a purchased sta</div>
<div class="t" style="left:2288.0px;top:932.0px;height:11.2px;line-height:11.2px;font-size:9.3px;font-weight:400;color:#757575;">date.</div>
<div class="a" style="left:2288.0px;top:963.7px;width:106.0px;height:29.3px;background:#8b8b8d;border-radius:12px;"></div>
<div class="t" style="left:2296.0px;top:968.7px;height:10.0px;line-height:10.0px;font-size:8.3px;font-weight:700;color:#141414;">Product Title</div>
<div class="t" style="left:2296.0px;top:977.6px;height:7.2px;line-height:7.2px;font-size:6px;font-weight:400;color:#3a3a3a;">A long product</div>
<div class="t" style="left:2296.0px;top:984.6px;height:7.2px;line-height:7.2px;font-size:6px;font-weight:400;color:#3a3a3a;">description</div>
<div class="a" style="left:2352.0px;top:970.2px;width:36.0px;height:18.0px;background:#2a5ca3;border-radius:12px;"></div>
<div class="t" style="left:2070.0px;width:600px;text-align:center;top:975.3px;height:7.8px;line-height:7.8px;font-size:6.5px;font-weight:400;color:#7d9cc6;">$0.99</div>
<div class="a" style="left:2148.0px;top:871.0px;width:117.2px;height:254.6px;background:#8b8b8d;border-radius:0px;"></div>
<div class="a" style="left:2154.0px;top:877.8px;width:105.0px;height:21.5px;background:#3b842e;border-radius:11px;"></div>
<div class="a" style="left:2160px;top:883.8px;width:9px;height:9px;border-radius:50%;background:#8fb889"></div>
<div class="t" style="left:1912.0px;width:600px;text-align:center;top:881.8px;height:6.0px;line-height:6.0px;font-size:5px;font-weight:400;color:#7fae70;">You have successfully</div>
<div class="t" style="left:1912.0px;width:600px;text-align:center;top:888.8px;height:6.0px;line-height:6.0px;font-size:5px;font-weight:400;color:#7fae70;">purchased [product name]</div>
<div class="a" style="left:2154.0px;top:908.7px;width:105.0px;height:30.9px;background:#8b8b8d;border-radius:8px;box-shadow:0 2px 1.5px rgba(0,0,0,0.22)"></div>
<div class="t" style="left:2160.0px;top:910.8px;height:8.8px;line-height:8.8px;font-size:7.3px;font-weight:700;color:#141414;">Product Title</div>
<div class="t" style="left:2160.0px;top:918.5px;height:6.4px;line-height:6.4px;font-size:5.3px;font-weight:400;color:#333;">A long product</div>
<div class="t" style="left:2160.0px;top:925.0px;height:6.4px;line-height:6.4px;font-size:5.3px;font-weight:400;color:#333;">description</div>
<div class="a" style="left:2218.0px;top:912.2px;width:35.0px;height:17.5px;background:#2a5ca3;border-radius:20px;"></div>
<div class="t" style="left:1935.5px;width:600px;text-align:center;top:917.1px;height:7.8px;line-height:7.8px;font-size:6.5px;font-weight:400;color:#7d9cc6;">$0.99</div>
<div class="t" style="left:2160.0px;top:951.9px;height:13.0px;line-height:13.0px;font-size:10.8px;font-weight:700;color:#121212;">Non-Renewing</div>
<div class="t" style="left:2160.0px;top:964.1px;height:13.0px;line-height:13.0px;font-size:10.8px;font-weight:700;color:#121212;">Subscriptions</div>
<div class="a" style="left:2154.0px;top:986.6px;width:105.0px;height:46.9px;background:#8b8b8d;border-radius:8px;box-shadow:0 2px 1.5px rgba(0,0,0,0.22)"></div>
<div class="t" style="left:2160.0px;top:988.7px;height:8.8px;line-height:8.8px;font-size:7.3px;font-weight:700;color:#141414;">Product Title</div>
<div class="t" style="left:2160.0px;top:996.4px;height:6.4px;line-height:6.4px;font-size:5.3px;font-weight:400;color:#333;">A long product</div>
<div class="t" style="left:2160.0px;top:1002.9px;height:6.4px;line-height:6.4px;font-size:5.3px;font-weight:400;color:#333;">description</div>
<div class="t" style="left:2160.0px;top:1014.3px;height:6.6px;line-height:6.6px;font-size:5.5px;font-weight:700;color:#141414;">Non-Renewing Subscription is</div>
<div class="t" style="left:2160.0px;top:1020.6px;height:6.6px;line-height:6.6px;font-size:5.5px;font-weight:700;color:#141414;">active until 12/02/23</div>
<div class="a" style="left:2218.0px;top:990.1px;width:35.0px;height:17.5px;background:#3b842e;border-radius:20px;"></div>
<div class="a" style="left:2231.5px;top:994.9px;width:8px;height:8px;border-radius:50%;background:#a9c9a0"></div>
<div class="a" style="left:2154.0px;top:1041.6px;width:105.0px;height:25.1px;background:#8b8b8d;border-radius:8px;box-shadow:0 2px 1.5px rgba(0,0,0,0.22)"></div>
<div class="t" style="left:2160.0px;top:1043.7px;height:8.8px;line-height:8.8px;font-size:7.3px;font-weight:700;color:#141414;">Product Title</div>
<div class="t" style="left:2160.0px;top:1051.4px;height:6.4px;line-height:6.4px;font-size:5.3px;font-weight:400;color:#333;">A long product</div>
<div class="t" style="left:2160.0px;top:1057.9px;height:6.4px;line-height:6.4px;font-size:5.3px;font-weight:400;color:#333;">description</div>
<div class="a" style="left:2218.0px;top:1045.1px;width:35.0px;height:17.5px;background:#2a5ca3;border-radius:20px;"></div>
<div class="t" style="left:1935.5px;width:600px;text-align:center;top:1049.9px;height:7.8px;line-height:7.8px;font-size:6.5px;font-weight:400;color:#7d9cc6;">$0.99</div>
<div class="t" style="left:2160.0px;top:1079.3px;height:13.0px;line-height:13.0px;font-size:10.8px;font-weight:700;color:#121212;">Auto-Renewing</div>
<div class="t" style="left:2160.0px;top:1091.5px;height:13.0px;line-height:13.0px;font-size:10.8px;font-weight:700;color:#121212;">Subscription</div>
<div class="t" style="left:2160.0px;top:1106.9px;height:9.0px;line-height:9.0px;font-size:7.5px;font-weight:700;color:#121212;">Individual Plans</div>
<div class="a" style="left:2109px;top:1155.5px;width:400px;height:285px;border:3px dashed #8c8c8c"></div>
<div class="t" style="left:2148.0px;top:1143.9px;height:28.2px;line-height:28.2px;font-size:23.5px;font-weight:400;color:#606060;">Offering</div>
<div class="t" style="left:2288.0px;top:1171.2px;height:21.6px;line-height:21.6px;font-size:18px;font-weight:700;color:#8a8a8a;">Product Tile</div>
<div class="a" style="left:2288.0px;top:1203.0px;width:112.0px;height:4.0px;background:#4b3a8c;border-radius:0px;"></div>
<div class="t" style="left:2288.0px;top:1213.4px;height:11.2px;line-height:11.2px;font-size:9.3px;font-weight:400;color:#757575;">An auto-renewing subscriptio</div>
<div class="t" style="left:2288.0px;top:1223.2px;height:11.2px;line-height:11.2px;font-size:9.3px;font-weight:400;color:#757575;">subscription group, so it upda</div>
<div class="t" style="left:2288.0px;top:1233.0px;height:11.2px;line-height:11.2px;font-size:9.3px;font-weight:400;color:#757575;">the other subscriptions in that</div>
<div class="a" style="left:2288.0px;top:1264.8px;width:106.0px;height:29.8px;background:#8b8b8d;border-radius:12px;"></div>
<div class="t" style="left:2296.0px;top:1269.8px;height:10.0px;line-height:10.0px;font-size:8.3px;font-weight:700;color:#141414;">Product Title</div>
<div class="t" style="left:2296.0px;top:1278.7px;height:7.2px;line-height:7.2px;font-size:6px;font-weight:400;color:#3a3a3a;">A long product</div>
<div class="t" style="left:2296.0px;top:1285.7px;height:7.2px;line-height:7.2px;font-size:6px;font-weight:400;color:#3a3a3a;">description</div>
<div class="a" style="left:2352.0px;top:1271.3px;width:36.0px;height:18.0px;background:#2a5ca3;border-radius:12px;"></div>
<div class="t" style="left:2070.0px;width:600px;text-align:center;top:1276.4px;height:7.8px;line-height:7.8px;font-size:6.5px;font-weight:400;color:#7d9cc6;">$0.99</div>
<div class="a" style="left:2148.0px;top:1172.0px;width:117.2px;height:254.6px;background:#8b8b8d;border-radius:0px;"></div>
<div class="a" style="left:2154.0px;top:1179.0px;width:105.0px;height:21.5px;background:#3b842e;border-radius:11px;"></div>
<div class="a" style="left:2160px;top:1185.0px;width:9px;height:9px;border-radius:50%;background:#8fb889"></div>
<div class="t" style="left:1912.0px;width:600px;text-align:center;top:1183.0px;height:6.0px;line-height:6.0px;font-size:5px;font-weight:400;color:#7fae70;">You have successfully</div>
<div class="t" style="left:1912.0px;width:600px;text-align:center;top:1190.0px;height:6.0px;line-height:6.0px;font-size:5px;font-weight:400;color:#7fae70;">purchased [product name]</div>
<div class="t" style="left:2160.0px;top:1206.0px;height:9.0px;line-height:9.0px;font-size:7.5px;font-weight:700;color:#121212;">Individual Plans</div>
<div class="a" style="left:2154.0px;top:1228.0px;width:105.0px;height:25.0px;background:#8b8b8d;border-radius:8px;box-shadow:0 2px 1.5px rgba(0,0,0,0.22)"></div>
<div class="t" style="left:2160.0px;top:1230.1px;height:8.8px;line-height:8.8px;font-size:7.3px;font-weight:700;color:#141414;">Product Title</div>
<div class="t" style="left:2160.0px;top:1237.8px;height:6.4px;line-height:6.4px;font-size:5.3px;font-weight:400;color:#333;">A long product</div>
<div class="t" style="left:2160.0px;top:1244.3px;height:6.4px;line-height:6.4px;font-size:5.3px;font-weight:400;color:#333;">description</div>
<div class="a" style="left:2218.0px;top:1231.5px;width:35.0px;height:17.5px;background:#2a5ca3;border-radius:20px;"></div>
<div class="t" style="left:1935.5px;width:600px;text-align:center;top:1236.3px;height:7.8px;line-height:7.8px;font-size:6.5px;font-weight:400;color:#7d9cc6;">$0.99</div>
<div class="a" style="left:2154.0px;top:1261.0px;width:105.0px;height:68.0px;background:#8b8b8d;border-radius:8px;box-shadow:0 2px 1.5px rgba(0,0,0,0.22)"></div>
<div class="t" style="left:2160.0px;top:1263.1px;height:8.8px;line-height:8.8px;font-size:7.3px;font-weight:700;color:#141414;">Product Title</div>
<div class="t" style="left:2160.0px;top:1270.8px;height:6.4px;line-height:6.4px;font-size:5.3px;font-weight:400;color:#333;">A long product</div>
<div class="t" style="left:2160.0px;top:1277.3px;height:6.4px;line-height:6.4px;font-size:5.3px;font-weight:400;color:#333;">description</div>
<div class="t" style="left:2160.0px;top:1288.7px;height:6.6px;line-height:6.6px;font-size:5.5px;font-weight:700;color:#141414;">Auto-Renewable Subscription</div>
<div class="t" style="left:2160.0px;top:1295.0px;height:6.6px;line-height:6.6px;font-size:5.5px;font-weight:700;color:#141414;">renews on 12/02/23</div>
<div class="a" style="left:2218.0px;top:1264.5px;width:35.0px;height:17.5px;background:#3b842e;border-radius:20px;"></div>
<div class="a" style="left:2231.5px;top:1269.2px;width:8px;height:8px;border-radius:50%;background:#a9c9a0"></div>
<div class="a" style="left:2159.7px;top:1305.4px;width:93.3px;height:18.0px;background:#0c0c0c;border-radius:9px;"></div>
<div class="t" style="left:1906.5px;width:600px;text-align:center;top:1310.5px;height:7.8px;line-height:7.8px;font-size:6.5px;font-weight:700;color:#8a8a8a;">Manage Subscription</div>
<div class="t" style="left:2160.0px;top:1341.0px;height:9.0px;line-height:9.0px;font-size:7.5px;font-weight:700;color:#121212;">Family Plans</div>
<div class="a" style="left:2154.0px;top:1363.0px;width:105.0px;height:25.5px;background:#8b8b8d;border-radius:8px;box-shadow:0 2px 1.5px rgba(0,0,0,0.22)"></div>
<div class="t" style="left:2160.0px;top:1365.1px;height:8.8px;line-height:8.8px;font-size:7.3px;font-weight:700;color:#141414;">Product Title</div>
<div class="t" style="left:2160.0px;top:1372.8px;height:6.4px;line-height:6.4px;font-size:5.3px;font-weight:400;color:#333;">A long product</div>
<div class="t" style="left:2160.0px;top:1379.3px;height:6.4px;line-height:6.4px;font-size:5.3px;font-weight:400;color:#333;">description</div>
<div class="a" style="left:2218.0px;top:1366.5px;width:35.0px;height:17.5px;background:#2a5ca3;border-radius:20px;"></div>
<div class="t" style="left:1935.5px;width:600px;text-align:center;top:1371.3px;height:7.8px;line-height:7.8px;font-size:6.5px;font-weight:400;color:#7d9cc6;">$0.99</div>
<div class="a" style="left:2154.0px;top:1396.5px;width:105.0px;height:29.5px;background:#8b8b8d;border-radius:8px;box-shadow:0 2px 1.5px rgba(0,0,0,0.22)"></div>
<div class="t" style="left:2160.0px;top:1398.6px;height:8.8px;line-height:8.8px;font-size:7.3px;font-weight:700;color:#141414;">Product Title</div>
<div class="t" style="left:2160.0px;top:1406.3px;height:6.4px;line-height:6.4px;font-size:5.3px;font-weight:400;color:#333;">A long product</div>
<div class="t" style="left:2160.0px;top:1412.8px;height:6.4px;line-height:6.4px;font-size:5.3px;font-weight:400;color:#333;">description</div>
<div class="t" style="left:2160.0px;top:1424.2px;height:6.6px;line-height:6.6px;font-size:5.5px;font-weight:700;color:#141414;">Active as part of a family members</div>
<div class="a" style="left:2218.0px;top:1400.0px;width:35.0px;height:17.5px;background:#3b842e;border-radius:20px;"></div>
<div class="a" style="left:2231.5px;top:1404.8px;width:8px;height:8px;border-radius:50%;background:#a9c9a0"></div>
<div class="a" style="left:2109px;top:1451.5px;width:400px;height:285px;border:3px dashed #8c8c8c"></div>
<div class="t" style="left:2148.0px;top:1439.9px;height:28.2px;line-height:28.2px;font-size:23.5px;font-weight:400;color:#606060;">Offering</div>
<div class="t" style="left:2288.0px;top:1467.2px;height:21.6px;line-height:21.6px;font-size:18px;font-weight:700;color:#8a8a8a;">Product Tile</div>
<div class="a" style="left:2288.0px;top:1499.0px;width:112.0px;height:4.0px;background:#4b3a8c;border-radius:0px;"></div>
<div class="t" style="left:2288.0px;top:1509.4px;height:11.2px;line-height:11.2px;font-size:9.3px;font-weight:400;color:#757575;">An auto-renewing subscriptio</div>
<div class="t" style="left:2288.0px;top:1519.2px;height:11.2px;line-height:11.2px;font-size:9.3px;font-weight:400;color:#757575;">to users who have never bou</div>
<div class="t" style="left:2288.0px;top:1529.0px;height:11.2px;line-height:11.2px;font-size:9.3px;font-weight:400;color:#757575;">on the tile and can only be bo</div>
<div class="t" style="left:2288.0px;top:1538.8px;height:11.2px;line-height:11.2px;font-size:9.3px;font-weight:400;color:#757575;">group, with it paying full price</div>
<div class="t" style="left:2288.0px;top:1548.6px;height:11.2px;line-height:11.2px;font-size:9.3px;font-weight:400;color:#757575;"></div>
<div class="t" style="left:2288.0px;top:1558.4px;height:11.2px;line-height:11.2px;font-size:9.3px;font-weight:700;color:#8a8a8a;">The tile updates to purchas</div>
<div class="t" style="left:2288.0px;top:1568.2px;height:11.2px;line-height:11.2px;font-size:9.3px;font-weight:700;color:#8a8a8a;">subscriptions in that group</div>
<div class="a" style="left:2288.0px;top:1599.4px;width:106.0px;height:45.3px;background:#8b8b8d;border-radius:12px;"></div>
<div class="t" style="left:2296.0px;top:1604.4px;height:10.0px;line-height:10.0px;font-size:8.3px;font-weight:700;color:#141414;">Product Title</div>
<div class="t" style="left:2296.0px;top:1613.3px;height:7.2px;line-height:7.2px;font-size:6px;font-weight:400;color:#3a3a3a;">A long product</div>
<div class="t" style="left:2296.0px;top:1620.3px;height:7.2px;line-height:7.2px;font-size:6px;font-weight:400;color:#3a3a3a;">description</div>
<div class="t" style="left:2296.0px;top:1626.8px;height:7.2px;line-height:7.2px;font-size:6px;font-weight:700;color:#141414;">Get 1st month free then $0.99 per</div>
<div class="t" style="left:2296.0px;top:1633.8px;height:7.2px;line-height:7.2px;font-size:6px;font-weight:700;color:#141414;">month</div>
<div class="a" style="left:2352.0px;top:1605.9px;width:36.0px;height:22.0px;background:#2a5ca3;border-radius:12px;"></div>
<div class="t" style="left:2070.0px;width:600px;text-align:center;top:1607.0px;height:7.8px;line-height:7.8px;font-size:6.5px;font-weight:400;color:#7d9cc6;">$0.99/</div>
<div class="t" style="left:2070.0px;width:600px;text-align:center;top:1614.5px;height:7.8px;line-height:7.8px;font-size:6.5px;font-weight:400;color:#7d9cc6;">month</div>
<div class="a" style="left:2288.0px;top:1659.8px;width:106.0px;height:46.2px;background:#8b8b8d;border-radius:12px;"></div>
<div class="t" style="left:2296.0px;top:1664.8px;height:10.0px;line-height:10.0px;font-size:8.3px;font-weight:700;color:#141414;">Product Title</div>
<div class="t" style="left:2296.0px;top:1673.7px;height:7.2px;line-height:7.2px;font-size:6px;font-weight:400;color:#3a3a3a;">A long product</div>
<div class="t" style="left:2296.0px;top:1680.7px;height:7.2px;line-height:7.2px;font-size:6px;font-weight:400;color:#3a3a3a;">description</div>
<div class="t" style="left:2296.0px;top:1687.2px;height:7.2px;line-height:7.2px;font-size:6px;font-weight:700;color:#141414;">Get 1st month free then $9.99 per</div>
<div class="t" style="left:2296.0px;top:1694.2px;height:7.2px;line-height:7.2px;font-size:6px;font-weight:700;color:#141414;">year</div>
<div class="a" style="left:2352.0px;top:1666.3px;width:36.0px;height:22.0px;background:#2a5ca3;border-radius:12px;"></div>
<div class="t" style="left:2070.0px;width:600px;text-align:center;top:1667.4px;height:7.8px;line-height:7.8px;font-size:6.5px;font-weight:400;color:#7d9cc6;">$9.99/</div>
<div class="t" style="left:2070.0px;width:600px;text-align:center;top:1674.9px;height:7.8px;line-height:7.8px;font-size:6.5px;font-weight:400;color:#7d9cc6;">year</div>
<div class="a" style="left:2148.0px;top:1468.0px;width:117.2px;height:254.6px;background:#8b8b8d;border-radius:0px;"></div>
<div class="a" style="left:2154.0px;top:1475.0px;width:105.0px;height:21.5px;background:#3b842e;border-radius:11px;"></div>
<div class="a" style="left:2160px;top:1481.0px;width:9px;height:9px;border-radius:50%;background:#8fb889"></div>
<div class="t" style="left:1912.0px;width:600px;text-align:center;top:1479.0px;height:6.0px;line-height:6.0px;font-size:5px;font-weight:400;color:#7fae70;">You have successfully</div>
<div class="t" style="left:1912.0px;width:600px;text-align:center;top:1486.0px;height:6.0px;line-height:6.0px;font-size:5px;font-weight:400;color:#7fae70;">purchased [product name]</div>
<div class="t" style="left:2160.0px;top:1507.1px;height:13.0px;line-height:13.0px;font-size:10.8px;font-weight:700;color:#121212;">Auto-Renewing</div>
<div class="t" style="left:2160.0px;top:1519.3px;height:13.0px;line-height:13.0px;font-size:10.8px;font-weight:700;color:#121212;">Subscription</div>
<div class="t" style="left:2160.0px;top:1534.2px;height:9.0px;line-height:9.0px;font-size:7.5px;font-weight:700;color:#121212;">Individual Plans</div>
<div class="a" style="left:2154.0px;top:1556.0px;width:105.0px;height:25.5px;background:#8b8b8d;border-radius:8px;box-shadow:0 2px 1.5px rgba(0,0,0,0.22)"></div>
<div class="t" style="left:2160.0px;top:1558.1px;height:8.8px;line-height:8.8px;font-size:7.3px;font-weight:700;color:#141414;">Product Title</div>
<div class="t" style="left:2160.0px;top:1565.8px;height:6.4px;line-height:6.4px;font-size:5.3px;font-weight:400;color:#333;">A long product</div>
<div class="t" style="left:2160.0px;top:1572.3px;height:6.4px;line-height:6.4px;font-size:5.3px;font-weight:400;color:#333;">description</div>
<div class="a" style="left:2218.0px;top:1559.5px;width:35.0px;height:17.5px;background:#2a5ca3;border-radius:20px;"></div>
<div class="t" style="left:1935.5px;width:600px;text-align:center;top:1564.3px;height:7.8px;line-height:7.8px;font-size:6.5px;font-weight:400;color:#7d9cc6;">$0.99</div>
<div class="a" style="left:2154.0px;top:1589.0px;width:105.0px;height:69.0px;background:#8b8b8d;border-radius:8px;box-shadow:0 2px 1.5px rgba(0,0,0,0.22)"></div>
<div class="t" style="left:2160.0px;top:1591.1px;height:8.8px;line-height:8.8px;font-size:7.3px;font-weight:700;color:#141414;">Product Title</div>
<div class="t" style="left:2160.0px;top:1598.8px;height:6.4px;line-height:6.4px;font-size:5.3px;font-weight:400;color:#333;">A long product</div>
<div class="t" style="left:2160.0px;top:1605.3px;height:6.4px;line-height:6.4px;font-size:5.3px;font-weight:400;color:#333;">description</div>
<div class="t" style="left:2160.0px;top:1616.7px;height:6.6px;line-height:6.6px;font-size:5.5px;font-weight:700;color:#141414;">Auto-Renewable Subscription</div>
<div class="t" style="left:2160.0px;top:1623.0px;height:6.6px;line-height:6.6px;font-size:5.5px;font-weight:700;color:#141414;">renews on 12/02/23</div>
<div class="a" style="left:2218.0px;top:1592.5px;width:35.0px;height:17.5px;background:#3b842e;border-radius:20px;"></div>
<div class="a" style="left:2231.5px;top:1597.2px;width:8px;height:8px;border-radius:50%;background:#a9c9a0"></div>
<div class="a" style="left:2159.7px;top:1633.8px;width:93.3px;height:18.0px;background:#0c0c0c;border-radius:9px;"></div>
<div class="t" style="left:1906.5px;width:600px;text-align:center;top:1638.9px;height:7.8px;line-height:7.8px;font-size:6.5px;font-weight:700;color:#8a8a8a;">Manage Subscription</div>
<div class="t" style="left:2160.0px;top:1669.5px;height:9.0px;line-height:9.0px;font-size:7.5px;font-weight:700;color:#121212;">Family Plans</div>
<div class="a" style="left:2154.0px;top:1691.0px;width:105.0px;height:26.0px;background:#8b8b8d;border-radius:8px;box-shadow:0 2px 1.5px rgba(0,0,0,0.22)"></div>
<div class="t" style="left:2160.0px;top:1693.1px;height:8.8px;line-height:8.8px;font-size:7.3px;font-weight:700;color:#141414;">Product Title</div>
<div class="t" style="left:2160.0px;top:1700.8px;height:6.4px;line-height:6.4px;font-size:5.3px;font-weight:400;color:#333;">A long product</div>
<div class="t" style="left:2160.0px;top:1707.3px;height:6.4px;line-height:6.4px;font-size:5.3px;font-weight:400;color:#333;">description</div>
<div class="a" style="left:2218.0px;top:1694.5px;width:35.0px;height:17.5px;background:#2a5ca3;border-radius:20px;"></div>
<div class="t" style="left:1935.5px;width:600px;text-align:center;top:1699.3px;height:7.8px;line-height:7.8px;font-size:6.5px;font-weight:400;color:#7d9cc6;">$0.99</div>
<div class="a" style="left:2374.5px;top:159.0px;width:15.0px;height:574.0px;background:rgba(10,10,12,0.45);border-radius:8px;border:1.5px solid #4e4e50"></div>
<div class="a" style="left:1277.0px;top:1697.0px;width:533.0px;height:14.0px;background:#1d1d1f;border-radius:7px;border:1.5px solid #4a4a4c"></div>
<!-- CANVAS END -->
</div></div>

<!-- RIGHT PANEL -->
<div class="a" id="right" style="left:2399px;top:93px;width:477px;height:1627px;background:#19191b"></div>
<div class="a" style="left:2398px;top:93px;width:1px;height:1627px;background:#242426"></div>

<!-- RIGHT CONTENT START -->
<div class="t" style="left:2432.0px;top:117.5px;font-size:21.8px;font-weight:700;color:#a6a6a6;">Design</div>
<div class="t" style="left:2537.0px;top:117.5px;font-size:21.8px;font-weight:700;color:#6c6c6c;">Prototype</div>
<div class="t" style="left:2672.7px;top:117.5px;font-size:21.8px;font-weight:700;color:#6c6c6c;">Inspect</div>
<div class="t" style="left:2432.0px;top:207.0px;font-size:21.8px;font-weight:700;color:#a3a3a3;">Background</div>
<div class="a" style="left:2432px;top:270px;width:33px;height:33px;border-radius:2px;background:#262628"></div>
<div class="t" style="left:2481.0px;top:271.0px;font-size:23.8px;font-weight:400;color:#9a9a9a;">535353</div>
<div class="t" style="left:2625.5px;top:271.0px;font-size:21.5px;font-weight:400;color:#9a9a9a;">100%</div>
<div class="t" style="left:2432.0px;top:369.4px;font-size:21.8px;font-weight:700;color:#a3a3a3;">Local styles</div>
<div class="t" style="left:2432.0px;top:449.0px;font-size:23.5px;font-weight:400;color:#6a6a6a;">Text styles</div>
<div class="t" style="left:2434px;top:513.0px;font-size:24.2px;font-weight:700;color:#8c8c8c">Ag</div>
<div class="t" style="left:2482.5px;top:515.0px;font-size:23px;color:#9c9c9c">Header<span style="color:#7f7f7f"> · 48/Auto</span></div>
<div class="t" style="left:2434px;top:581.0px;font-size:24.2px;font-weight:700;color:#8c8c8c">Ag</div>
<div class="t" style="left:2482.5px;top:583.0px;font-size:23px;color:#9c9c9c">Section Title<span style="color:#7f7f7f"> · 36/Auto</span></div>
<div class="t" style="left:2434px;top:649.0px;font-size:24.2px;font-weight:700;color:#8c8c8c">Ag</div>
<div class="t" style="left:2482.5px;top:651.0px;font-size:23px;color:#9c9c9c">Product Title<span style="color:#7f7f7f"> · 24/Auto</span></div>
<div class="t" style="left:2434px;top:717.0px;font-size:24.2px;font-weight:700;color:#8c8c8c">Ag</div>
<div class="t" style="left:2482.5px;top:719.0px;font-size:23px;color:#9c9c9c">Product Description<span style="color:#7f7f7f"> · 18/Auto</span></div>
<div class="t" style="left:2434px;top:785.0px;font-size:24.2px;font-weight:700;color:#8c8c8c">Ag</div>
<div class="t" style="left:2482.5px;top:787.0px;font-size:23px;color:#9c9c9c">Purchase Button<span style="color:#7f7f7f"> · 24/Auto</span></div>
<div class="t" style="left:2434px;top:853.0px;font-size:24.2px;font-weight:700;color:#8c8c8c">Ag</div>
<div class="t" style="left:2482.5px;top:855.0px;font-size:23px;color:#9c9c9c">Alert<span style="color:#7f7f7f"> · 18/Auto</span></div>
<div class="t" style="left:2432.0px;top:953.3px;font-size:23.5px;font-weight:400;color:#6a6a6a;">Color styles</div>
<div class="t" style="left:2482.0px;top:1019.4px;font-size:22.5px;font-weight:400;color:#9c9c9c;">Colors</div>
<div class="t" style="left:2482.0px;top:1087.0px;font-size:22.5px;font-weight:400;color:#9c9c9c;">Greyscale</div>
<div class="t" style="left:2432.0px;top:1187.4px;font-size:21.8px;font-weight:700;color:#8e8e8e;">Export</div>
<svg style="left:0;top:0" width="1" height="1" fill="none" stroke="#262628" stroke-width="1.5"><path d="M2399 173.5H2876M2399 334.5H2876M2399 1153H2876M2399 1250H2876"/><g stroke="#8a8a8a" stroke-width="2"><path d="M2832 373v22M2821 384h22M2832 1191.5v22M2821 1202.5h22"/><path d="M2818 286q14-13 28 0q-14 13-28 0z" stroke-width="2.2"/><circle cx="2832" cy="286" r="4" fill="#8a8a8a" stroke="none"/></g><path d="M2446 1029v11l7-5.5zM2446 1096.5v11l7-5.5z" fill="#4e4e4e" stroke="none"/></svg>
<div class="a" style="left:2760.5px;top:1600.5px;width:71px;height:71px;border-radius:50%;background:#111113;box-shadow:0 1px 4px rgba(0,0,0,0.3)"></div>
<svg style="left:0;top:0" width="1" height="1" fill="none"><path d="M2788.6 1629.5A7.6 7.6 0 1 1 2802.5 1633.5Q2797 1639 2797 1642" stroke="#8a8a8a" stroke-width="2"/><circle cx="2797" cy="1648.7" r="1.3" fill="#8a8a8a"/></svg>
<!-- RIGHT CONTENT END -->
<!-- MODAL -->
<div class="a" id="modal" style="left:981px;top:256px;width:918px;height:563px;background:#2d2c30;border:1px solid #3b3a3e;border-radius:3px;box-shadow:0 5px 14px rgba(0,0,0,0.5)"></div>

<!-- MODAL CONTENT START -->
<div class="t" style="left:1021.0px;top:281.0px;font-size:21.8px;font-weight:700;color:#ffffff;">Invite</div>
<div class="t" style="left:1127.0px;top:281.0px;font-size:21.3px;font-weight:700;color:#c9c9c9;">Publish</div>
<svg style="left:0;top:0" width="1" height="1" fill="none"><path d="M1848.5 285.5L1869.5 306.5M1869.5 285.5L1848.5 306.5" stroke="#e6e6e6" stroke-width="2.2"/><path d="M982 336H1898" stroke="#3d3d3f" stroke-width="2"/><path d="M982 722H1898" stroke="#3d3d3f" stroke-width="2"/></svg>
<div class="a" style="left:1013.5px;top:369.5px;width:644.5px;height:70.5px;border:1.5px solid #454547;border-radius:4px"></div>
<div class="t" style="left:1041.0px;top:390.5px;font-size:23px;font-weight:400;color:#8c8c8c;">Email, comma separated</div>
<div class="t" style="left:1525.0px;top:390.5px;font-size:23.5px;font-weight:400;color:#f2f2f2;">can edit</div>
<div class="a" style="left:1675px;top:373px;width:192px;height:63px;border-radius:9px;background:#6a6a6c"></div>
<div class="t" style="left:1471.0px;width:600px;text-align:center;top:390.0px;font-size:23.4px;font-weight:400;color:#3b3b3d;">Send invite</div>
<div class="t" style="left:1085.5px;top:482.5px;font-size:23.1px;font-weight:400;color:#cfcfcf;">Everyone at Open Source Figma can access this file.</div>
<div class="t" style="left:1085.5px;top:563.0px;font-size:23.6px;font-weight:400;color:#f5f5f5;">Only people invited to this file</div>
<div class="t" style="left:1166.6px;width:700px;text-align:right;top:563.5px;font-size:23.1px;font-weight:400;color:#f5f5f5;">can access</div>
<div class="t" style="left:1085.5px;top:642px;font-size:23px;color:#f5f5f5">Oscar <span style="color:#9a9a9a">(you)</span></div>
<div class="t" style="left:1166.6px;width:700px;text-align:right;top:642.5px;font-size:23.5px;font-weight:400;color:#f5f5f5;">owner</div>
<div class="t" style="left:1055.0px;top:756.0px;font-size:23.1px;font-weight:400;color:#8fc1ee;">Copy link</div>
<div class="t" style="left:1237.0px;top:756.0px;font-size:23.2px;font-weight:400;color:#8fc1ee;">Get embed code</div>
<div class="t" style="left:1616.6px;top:756.0px;font-size:23.6px;font-weight:400;color:#8c8c8c;">Link to current selection</div>
<div class="a" style="left:1574px;top:760px;width:24px;height:23px;border:2px solid #7a7a7a;border-radius:3px"></div>
<svg style="left:0;top:0" width="1" height="1" fill="none"><path d="M1619 403l5 5 5-5" stroke="#b0b0b0" stroke-width="1.6"/><path d="M1404 576l5 5 5-5" stroke="#9a9a9a" stroke-width="1.6"/><g stroke="#8a8a8a" stroke-width="1.8"><circle cx="1037.5" cy="490.5" r="6"/><circle cx="1052.5" cy="490.5" r="6"/><path d="M1029.5 507.5a8 8 0 0 1 16 0zM1045 507.5a8 8 0 0 1 16 0z"/></g><g stroke="#f0f0f0" stroke-width="2"><path d="M1035.5 573.5v-5a9.3 9.3 0 0 1 18.6 0v5"/><rect x="1031.5" y="573.5" width="27" height="19"/></g><circle cx="1044.5" cy="656.5" r="15" fill="#f7f7f7" stroke="#0a0a0a" stroke-width="2.2"/><path transform="translate(1044.5 656.5)" d="M-2.3 -10.4L-0.7 -10.4L-0.7 6.8L-2.3 6.5ZM-0.7 -10.4L-5.7 -6.2L-5.2 -4.6L-2.3 -6.5ZM-5.7 1L-4 -0.5L-4 4.5L-5.7 5ZM3.1 -7L5.1 -7.1L5.1 9.8L3.1 9.5ZM5.1 -7.1L0.4 -3.6L0.6 -1.9L3.1 -3.6Z" fill="#0a0a0a"/><g stroke="#8fc1ee" stroke-width="2" transform="rotate(-45 1028.6 771.3)"><path d="M1024 764.8h-6.5a6.5 6.5 0 0 0 0 13h6.5"/><path d="M1033.2 764.8h6.5a6.5 6.5 0 0 1 0 13h-6.5"/><path d="M1022 771.3h13"/></g><path d="M1210 762l-9.5 9.3 9.5 9.3M1216 762l9.5 9.3-9.5 9.3" stroke="#8fc1ee" stroke-width="2"/></svg>
<div class="a" style="left:986px;top:720.5px;width:193.5px;height:99.5px;border:5.4px solid #e6472d"></div>
<!-- MODAL CONTENT END -->
</body></html>
